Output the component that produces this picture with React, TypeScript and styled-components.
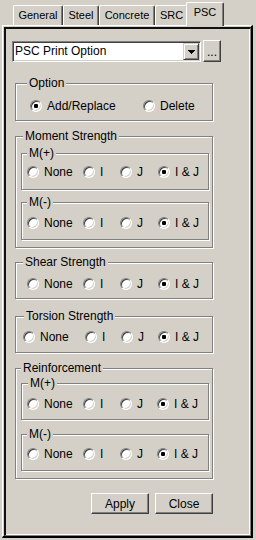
import React from 'react'
import styled, { createGlobalStyle } from 'styled-components'

const FACE = '#d4d0c8'
const SHADOW = '#808080'
const DARK = '#404040'

const GlobalStyle = createGlobalStyle`
  html, body {
    margin: 0;
    padding: 0;
    background: ${FACE};
  }
  body {
    font-family: "Liberation Sans", Arial, sans-serif;
    font-size: 12px;
    color: #000;
  }
`

const Window = styled.div`
  box-sizing: border-box;
  width: 256px;
  height: 540px;
  padding-top: 2px;
  background: ${FACE};
  overflow: hidden;
`

const TabStrip = styled.div`
  display: flex;
  align-items: flex-start;
  height: 23px;
  padding-left: 13px;
`

const Tab = styled.div<{ $w: number; $active?: boolean }>`
  box-sizing: border-box;
  position: relative;
  z-index: ${({ $active }) => ($active ? 1 : 0)};
  flex: none;
  width: ${({ $w }) => $w}px;
  height: ${({ $active }) => ($active ? 24 : 20)}px;
  margin-top: ${({ $active }) => ($active ? 0 : 3)}px;
  margin-left: ${({ $active }) => ($active ? -2 : 0)}px;
  padding-top: ${({ $active }) => ($active ? 3 : 3)}px;
  border: 1px solid #fff;
  border-right-color: ${DARK};
  border-bottom: none;
  border-radius: 2px 2px 0 0;
  box-shadow: inset -1px 0 0 ${SHADOW};
  background: ${FACE};
  text-align: center;
  font-size: 11px;
  line-height: 13px;
  white-space: nowrap;
`

const Pane = styled.div`
  box-sizing: border-box;
  display: flex;
  width: 251px;
  height: 513px;
  margin-left: 2px;
  padding: 1px 0 0 1px;
  border-style: solid;
  border-width: 1px 2px 2px 1px;
  border-color: #fff #000 #000 #fff;
`

const Sheet = styled.div`
  flex: 1;
  border-style: solid;
  border-width: 2px 1px 1px 2px;
  border-color: #101010 ${SHADOW} ${SHADOW} #101010;
  box-shadow: inset -1px -1px 0 #fff;
`

const ComboRow = styled.div`
  display: flex;
  align-items: flex-start;
  gap: 2px;
  margin: 11px 0 0 6px;
`

const Combo = styled.div`
  box-sizing: border-box;
  display: flex;
  align-items: flex-start;
  width: 189px;
  height: 21px;
  margin-top: 1px;
  padding: 1px 1px 1px 2px;
  border: 1px solid;
  border-color: ${SHADOW} #fff #fff ${SHADOW};
  box-shadow: inset 1px 1px 0 ${DARK}, inset -1px -1px 0 ${FACE};
  background: #fff;
`

const ComboText = styled.span`
  flex: 1;
  line-height: 17px;
  font-size: 12px;
`

const Raised = styled.div`
  box-sizing: border-box;
  display: flex;
  align-items: center;
  justify-content: center;
  border: 1px solid;
  border-color: #fff ${DARK} ${DARK} #fff;
  box-shadow: inset -1px -1px 0 ${SHADOW};
  background: ${FACE};
`

const DropButton = styled(Raised)`
  width: 16px;
  height: 17px;
  border-color: ${FACE} ${DARK} ${DARK} ${FACE};
  box-shadow: inset 1px 1px 0 #fff, inset -1px -1px 0 ${SHADOW};
`

const EllipsisButton = styled(Raised)`
  width: 18px;
  height: 22px;
  align-items: flex-end;
  padding-bottom: 4px;
  font-size: 12px;
  line-height: 10px;
  letter-spacing: 0;
`

const Group = styled.div<{ $top: number; $left: number; $w: number; $h: number }>`
  box-sizing: border-box;
  width: ${({ $w }) => $w}px;
  height: ${({ $h }) => $h}px;
  margin: ${({ $top }) => $top}px 0 0 ${({ $left }) => $left}px;
  border: 1px solid ${SHADOW};
  box-shadow: inset 1px 1px 0 #fff, 1px 1px 0 #fff;
`

const Legend = styled.div<{ $x: number }>`
  width: fit-content;
  margin: -8px 0 0 ${({ $x }) => $x}px;
  padding: 0 2px;
  background: ${FACE};
  line-height: 14px;
  white-space: nowrap;
`

const RadioRow = styled.div<{ $top: number; $pad: number }>`
  display: flex;
  align-items: center;
  height: 14px;
  margin-top: ${({ $top }) => $top}px;
  padding-left: ${({ $pad }) => $pad}px;
`

const RadioItem = styled.label<{ $w?: number }>`
  display: flex;
  flex: none;
  align-items: center;
  gap: 5px;
  width: ${({ $w }) => ($w ? `${$w}px` : 'auto')};
  line-height: 14px;
  white-space: nowrap;
`

const RadioMark = styled.span<{ $checked: boolean }>`
  box-sizing: border-box;
  flex: none;
  width: 12px;
  height: 12px;
  border-radius: 50%;
  border: 1px solid;
  border-color: ${SHADOW} #fff #fff ${SHADOW};
  box-shadow: inset 1px 1px 0 ${DARK}, inset -1px -1px 0 ${FACE};
  background: ${({ $checked }) =>
    $checked ? 'radial-gradient(circle, #000 0 2px, #fff 2.4px)' : '#fff'};
`

const ButtonRow = styled.div`
  display: flex;
  gap: 6px;
  margin: 14px 0 0 85px;
`

const PushButton = styled(Raised)`
  width: 58px;
  height: 21px;
  font-size: 12px;
  line-height: 14px;
`

function Radio({ label, checked = false, w }: { label: string; checked?: boolean; w?: number }) {
  return (
    <RadioItem $w={w}>
      <RadioMark $checked={checked} />
      <span>{label}</span>
    </RadioItem>
  )
}

const CHOICES = ['None', 'I', 'J', 'I & J']

function Choices({ top, pad, widths }: { top: number; pad: number; widths: number[] }) {
  return (
    <RadioRow $top={top} $pad={pad}>
      {CHOICES.map((c, i) => (
        <Radio key={c} label={c} w={widths[i]} checked={i === 3} />
      ))}
    </RadioRow>
  )
}

function Arrow() {
  return (
    <svg width="7" height="4" viewBox="0 0 7 4" shapeRendering="crispEdges">
      <path d="M0 0h7v1H0zM1 1h5v1H1zM2 2h3v1H2zM3 3h1v1H3z" fill="#000" />
    </svg>
  )
}

export default function App() {
  return (
    <Window>
      <GlobalStyle />
      <TabStrip>
        <Tab $w={50}>General</Tab>
        <Tab $w={36}>Steel</Tab>
        <Tab $w={56}>Concrete</Tab>
        <Tab $w={33}>SRC</Tab>
        <Tab $w={38} $active>PSC</Tab>
      </TabStrip>
      <Pane>
        <Sheet>
          <ComboRow>
            <Combo>
              <ComboText>PSC Print Option</ComboText>
              <DropButton>
                <Arrow />
              </DropButton>
            </Combo>
            <EllipsisButton>...</EllipsisButton>
          </ComboRow>

          <Group $top={21} $left={9} $w={198} $h={38}>
            <Legend $x={11}>Option</Legend>
            <RadioRow $top={9} $pad={14}>
              <Radio label="Add/Replace" checked w={113} />
              <Radio label="Delete" />
            </RadioRow>
          </Group>

          <Group $top={15} $left={9} $w={198} $h={112}>
            <Legend $x={7}>Moment Strength</Legend>
            <Group $top={10} $left={5} $w={188} $h={37}>
              <Legend $x={5}>M(+)</Legend>
              <Choices top={5} pad={5} widths={[56, 37, 38]} />
            </Group>
            <Group $top={12} $left={5} $w={188} $h={38}>
              <Legend $x={5}>M(-)</Legend>
              <Choices top={7} pad={5} widths={[56, 37, 38]} />
            </Group>
          </Group>

          <Group $top={14} $left={9} $w={198} $h={37}>
            <Legend $x={7}>Shear Strength</Legend>
            <Choices top={8} pad={11} widths={[56, 37, 38]} />
          </Group>

          <Group $top={17} $left={9} $w={198} $h={37}>
            <Legend $x={8}>Torsion Strength</Legend>
            <Choices top={7} pad={7} widths={[62, 36, 37]} />
          </Group>

          <Group $top={15} $left={9} $w={198} $h={111}>
            <Legend $x={5}>Reinforcement</Legend>
            <Group $top={8} $left={5} $w={188} $h={37}>
              <Legend $x={6}>M(+)</Legend>
              <Choices top={7} pad={5} widths={[56, 37, 37]} />
            </Group>
            <Group $top={14} $left={5} $w={188} $h={37}>
              <Legend $x={5}>M(-)</Legend>
              <Choices top={6} pad={5} widths={[56, 37, 37]} />
            </Group>
          </Group>

          <ButtonRow>
            <PushButton>Apply</PushButton>
            <PushButton>Close</PushButton>
          </ButtonRow>
        </Sheet>
      </Pane>
    </Window>
  )
}
